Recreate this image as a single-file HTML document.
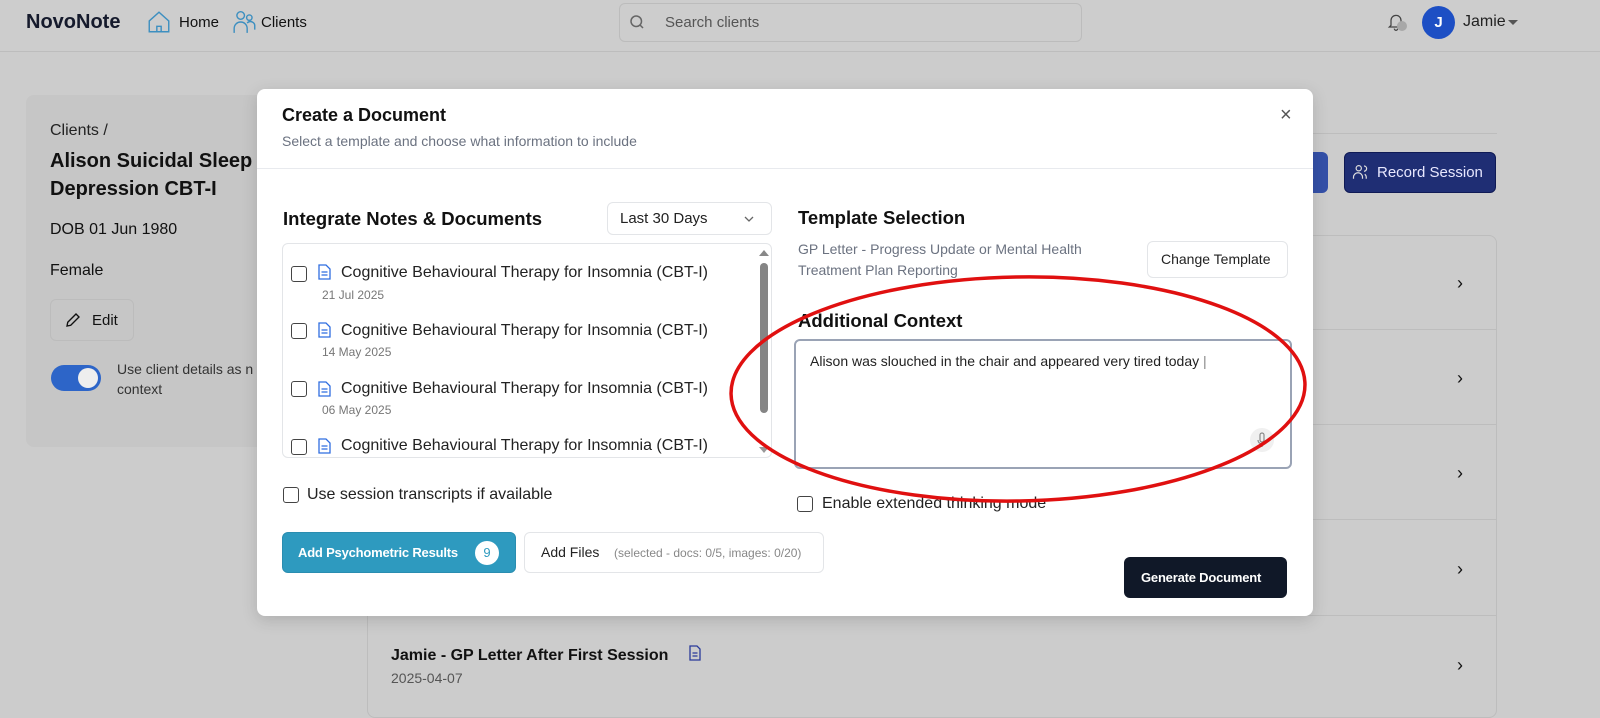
<!DOCTYPE html>
<html><head><meta charset="utf-8"><style>
*{box-sizing:border-box;margin:0;padding:0}
body{width:1600px;height:718px;overflow:hidden;background:#cccccc;font-family:"Liberation Sans",sans-serif;color:#111;position:relative}
.abs{position:absolute}
.nav{left:0;top:0;width:1600px;height:52px;background:#cdcdcd;border-bottom:1px solid #bdbdbd}
.card{background:#c6c6c6;border-radius:8px}
.modal{left:257px;top:89px;width:1056px;height:527px;background:#fff;border-radius:8px;box-shadow:0 4px 16px rgba(0,0,0,.15)}
.cb{position:absolute;width:16px;height:16px;border:1.5px solid #444;border-radius:3px;background:#fff}
.doc{font-size:16px;color:#222}
.date{font-size:12px;color:#777}
.btn{position:absolute;border:1px solid #e3e5e8;border-radius:6px;background:#fff}
.row{position:absolute;left:367px;width:1130px;height:95px;border-bottom:1px solid #bdbdbd}
.chev{position:absolute;right:34px;top:38px;font-size:18px;color:#111}
</style></head><body>
<div class="abs nav"></div>
<div class="abs" style="left:26px;top:11px;font-size:20px;font-weight:bold;color:#151a2c">NovoNote</div>
<svg class="abs" style="left:146px;top:9px" width="26" height="26" viewBox="0 0 24 24" fill="none" stroke="#3d8fc0" stroke-width="1.3"><path d="M3 11L12 3l9 8v10H3z"/><path d="M10 21v-5h4v5"/></svg>
<div class="abs" style="left:179px;top:14px;font-size:15px">Home</div>
<svg class="abs" style="left:232px;top:9px" width="26" height="26" viewBox="0 0 24 24" fill="none" stroke="#3d8fc0" stroke-width="1.3"><circle cx="8" cy="6" r="3.5"/><circle cx="16" cy="8" r="2.5"/><path d="M2 22v-4a6 6 0 0 1 12 0v4"/><path d="M14 13a4 4 0 0 1 7 3v3"/></svg>
<div class="abs" style="left:261px;top:14px;font-size:15px">Clients</div>
<div class="abs" style="left:619px;top:3px;width:463px;height:39px;border:1px solid #bcbcbc;border-radius:6px"></div>
<svg class="abs" style="left:628px;top:13px" width="18" height="18" viewBox="0 0 24 24" fill="none" stroke="#666" stroke-width="2"><circle cx="11" cy="11" r="7"/><path d="M16 16l4 4"/></svg>
<div class="abs" style="left:665px;top:14px;font-size:15px;color:#555">Search clients</div>
<svg class="abs" style="left:1386px;top:12px" width="20" height="20" viewBox="0 0 24 24" fill="none" stroke="#444" stroke-width="1.5"><path d="M6 16V10a6 6 0 0 1 12 0v6l2 2H4z"/><path d="M10 20a2 2 0 0 0 4 0"/></svg>
<div class="abs" style="left:1397px;top:21px;width:10px;height:10px;border-radius:50%;background:#a8a8a8"></div>
<div class="abs" style="left:1422px;top:6px;width:33px;height:33px;border-radius:50%;background:#1d4fc4;color:#fff;font-size:15px;font-weight:bold;text-align:center;line-height:33px">J</div>
<div class="abs" style="left:1463px;top:13px;font-size:16px;color:#222">Jamie</div>
<div class="abs" style="left:1508px;top:20px;border:5px solid transparent;border-top-color:#555"></div>

<div class="abs card" style="left:26px;top:95px;width:250px;height:352px"></div>
<div class="abs" style="left:50px;top:122px;font-size:16px;color:#222">Clients /</div>
<div class="abs" style="left:50px;top:147px;font-size:20px;font-weight:bold;line-height:28px">Alison Suicidal Sleep<br>Depression CBT-I</div>
<div class="abs" style="left:50px;top:221px;font-size:16px">DOB 01 Jun 1980</div>
<div class="abs" style="left:50px;top:262px;font-size:16px">Female</div>
<div class="abs" style="left:50px;top:299px;width:84px;height:42px;border:1px solid #bcbcbc;border-radius:6px"></div>
<svg class="abs" style="left:64px;top:311px" width="18" height="18" viewBox="0 0 24 24" fill="none" stroke="#111" stroke-width="1.8"><path d="M4 20l1-5L16 4l4 4L9 19z"/></svg>
<div class="abs" style="left:92px;top:312px;font-size:15px">Edit</div>
<div class="abs" style="left:51px;top:365px;width:50px;height:26px;border-radius:13px;background:#2d65c8"></div>
<div class="abs" style="left:78px;top:368px;width:20px;height:20px;border-radius:50%;background:#eee"></div>
<div class="abs" style="left:117px;top:359px;font-size:14px;color:#333;line-height:20px">Use client details as n<br>context</div>

<div class="abs" style="left:1260px;top:133px;width:237px;height:1px;background:#bdbdbd"></div>
<div class="abs" style="left:1290px;top:152px;width:38px;height:41px;background:#3450a8;border-radius:6px"></div>
<div class="abs" style="left:1344px;top:152px;width:152px;height:41px;background:#1f2e74;border:1px solid #0f1a55;border-radius:6px"></div>
<svg class="abs" style="left:1352px;top:163px" width="18" height="18" viewBox="0 0 24 24" fill="none" stroke="#ddd" stroke-width="1.6"><circle cx="9" cy="7" r="3.5"/><path d="M2 21v-2a6 6 0 0 1 12 0v2"/><path d="M16 4a3.5 3.5 0 0 1 0 7M19 21v-2a5 5 0 0 0-2-4"/></svg>
<div class="abs" style="left:1377px;top:164px;font-size:15px;color:#e8e8ff">Record Session</div>

<div class="abs" style="left:367px;top:235px;width:1130px;height:483px;border:1px solid #bdbdbd;border-radius:8px"></div>
<div class="row" style="top:235px"><span class="chev">›</span></div>
<div class="row" style="top:330px"><span class="chev">›</span></div>
<div class="row" style="top:425px"><span class="chev">›</span></div>
<div class="row" style="top:521px"><span class="chev">›</span></div>
<div class="row" style="top:617px;border:none"><span class="chev">›</span></div>
<div class="abs" style="left:391px;top:647px;font-size:16px;font-weight:bold">Jamie - GP Letter After First Session</div>
<svg class="abs" style="left:688px;top:645px" width="14" height="16" viewBox="0 0 14 16" fill="none" stroke="#2a3a9a" stroke-width="1.3"><path d="M2 1h7l3 3v11H2z"/><path d="M4.5 8h5M4.5 11h5"/></svg>
<div class="abs" style="left:391px;top:670px;font-size:14px;color:#555">2025-04-07</div>

<div class="abs modal"></div>
<div class="abs" style="left:282px;top:105px;font-size:18px;font-weight:bold">Create a Document</div>
<div class="abs" style="left:282px;top:133px;font-size:14px;color:#6b7280">Select a template and choose what information to include</div>
<div class="abs" style="left:1280px;top:104px;font-size:20px;color:#555">×</div>
<div class="abs" style="left:257px;top:168px;width:1056px;height:1px;background:#e8eaee"></div>

<div class="abs" style="left:283px;top:208px;font-size:18.5px;font-weight:bold">Integrate Notes &amp; Documents</div>
<div class="abs" style="left:607px;top:202px;width:165px;height:33px;border:1px solid #e3e5e8;border-radius:6px"></div>
<div class="abs" style="left:620px;top:210px;font-size:15px;color:#222">Last 30 Days</div>
<svg class="abs" style="left:742px;top:212px" width="14" height="14" viewBox="0 0 14 14" fill="none" stroke="#666" stroke-width="1.3"><path d="M3 5l4 4 4-4"/></svg>
<div class="abs" style="left:282px;top:243px;width:490px;height:215px;border:1px solid #e3e5e8;border-radius:6px;overflow:hidden"></div>
<div class="abs" style="left:760px;top:263px;width:8px;height:150px;background:#858585;border-radius:4px"></div>
<div class="abs" style="left:759px;top:250px;border:5px solid transparent;border-bottom:6px solid #888;border-top:0"></div>
<div class="abs" style="left:759px;top:447px;border:5px solid transparent;border-top:6px solid #999;border-bottom:0"></div>

<div class="cb" style="left:291px;top:266px"></div><svg class="abs" style="left:318px;top:264px" width="13" height="16" viewBox="0 0 13 16" fill="none" stroke="#2f6de0" stroke-width="1.3"><path d="M1 1h7l4 4v10H1z"/><path d="M3.5 8h6M3.5 11h6"/></svg><div class="abs doc" style="left:341px;top:264px">Cognitive Behavioural Therapy for Insomnia (CBT-I)</div><div class="abs date" style="left:322px;top:288px">21 Jul 2025</div>
<div class="cb" style="left:291px;top:323px"></div><svg class="abs" style="left:318px;top:322px" width="13" height="16" viewBox="0 0 13 16" fill="none" stroke="#2f6de0" stroke-width="1.3"><path d="M1 1h7l4 4v10H1z"/><path d="M3.5 8h6M3.5 11h6"/></svg><div class="abs doc" style="left:341px;top:322px">Cognitive Behavioural Therapy for Insomnia (CBT-I)</div><div class="abs date" style="left:322px;top:345px">14 May 2025</div>
<div class="cb" style="left:291px;top:381px"></div><svg class="abs" style="left:318px;top:381px" width="13" height="16" viewBox="0 0 13 16" fill="none" stroke="#2f6de0" stroke-width="1.3"><path d="M1 1h7l4 4v10H1z"/><path d="M3.5 8h6M3.5 11h6"/></svg><div class="abs doc" style="left:341px;top:380px">Cognitive Behavioural Therapy for Insomnia (CBT-I)</div><div class="abs date" style="left:322px;top:403px">06 May 2025</div>
<div class="cb" style="left:291px;top:439px"></div><svg class="abs" style="left:318px;top:438px" width="13" height="16" viewBox="0 0 13 16" fill="none" stroke="#2f6de0" stroke-width="1.3"><path d="M1 1h7l4 4v10H1z"/><path d="M3.5 8h6M3.5 11h6"/></svg><div class="abs doc" style="left:341px;top:437px;height:19px;overflow:hidden">Cognitive Behavioural Therapy for Insomnia (CBT-I)</div>

<div class="cb" style="left:283px;top:487px"></div>
<div class="abs" style="left:307px;top:486px;font-size:16px;color:#222">Use session transcripts if available</div>

<div class="abs" style="left:282px;top:532px;width:234px;height:41px;background:#2e9abf;border:1px solid #2a8db0;border-radius:6px"></div>
<div class="abs" style="left:298px;top:545px;font-size:13px;font-weight:bold;color:#fff;letter-spacing:-0.2px">Add Psychometric Results</div>
<div class="abs" style="left:475px;top:541px;width:24px;height:24px;border-radius:50%;background:#fff;color:#2e9abf;font-size:13px;text-align:center;line-height:24px">9</div>
<div class="btn" style="left:524px;top:532px;width:300px;height:41px"></div>
<div class="abs" style="left:541px;top:544px;font-size:14px;color:#222">Add Files</div>
<div class="abs" style="left:614px;top:546px;font-size:12px;color:#888">(selected - docs: 0/5, images: 0/20)</div>

<div class="abs" style="left:798px;top:207px;font-size:18.5px;font-weight:bold">Template Selection</div>
<div class="abs" style="left:798px;top:239px;font-size:14px;color:#6b7280;line-height:21px">GP Letter - Progress Update or Mental Health<br>Treatment Plan Reporting</div>
<div class="btn" style="left:1147px;top:241px;width:141px;height:37px"></div>
<div class="abs" style="left:1161px;top:251px;font-size:14px;color:#222">Change Template</div>
<div class="abs" style="left:798px;top:310px;font-size:18.5px;font-weight:bold">Additional Context</div>
<div class="abs" style="left:794px;top:339px;width:498px;height:130px;border:2px solid #9aa3b5;border-radius:6px"></div>
<div class="abs" style="left:810px;top:353px;font-size:14px;color:#222">Alison was slouched in the chair and appeared very tired today<span style="color:#888"> |</span></div>
<div class="abs" style="left:1250px;top:428px;width:24px;height:24px;border-radius:50%;background:#f0f0f0"></div>
<svg class="abs" style="left:1255px;top:432px" width="14" height="16" viewBox="0 0 14 16" fill="none" stroke="#888" stroke-width="1.2"><rect x="5" y="1" width="4" height="9" rx="2"/><path d="M3 8a4 4 0 0 0 8 0M7 12v3"/></svg>
<div class="cb" style="left:797px;top:496px"></div>
<div class="abs" style="left:822px;top:495px;font-size:16px;color:#222">Enable extended thinking mode</div>
<div class="abs" style="left:1124px;top:557px;width:163px;height:41px;background:#101828;border-radius:6px"></div>
<div class="abs" style="left:1141px;top:570px;font-size:13px;font-weight:bold;color:#fff;letter-spacing:-0.2px">Generate Document</div>

<svg class="abs" style="left:0;top:0" width="1600" height="718"><ellipse cx="1018" cy="389" rx="287" ry="112" fill="none" stroke="#e01010" stroke-width="3.5" transform="rotate(-1 1018 389)"/></svg>
</body></html>
